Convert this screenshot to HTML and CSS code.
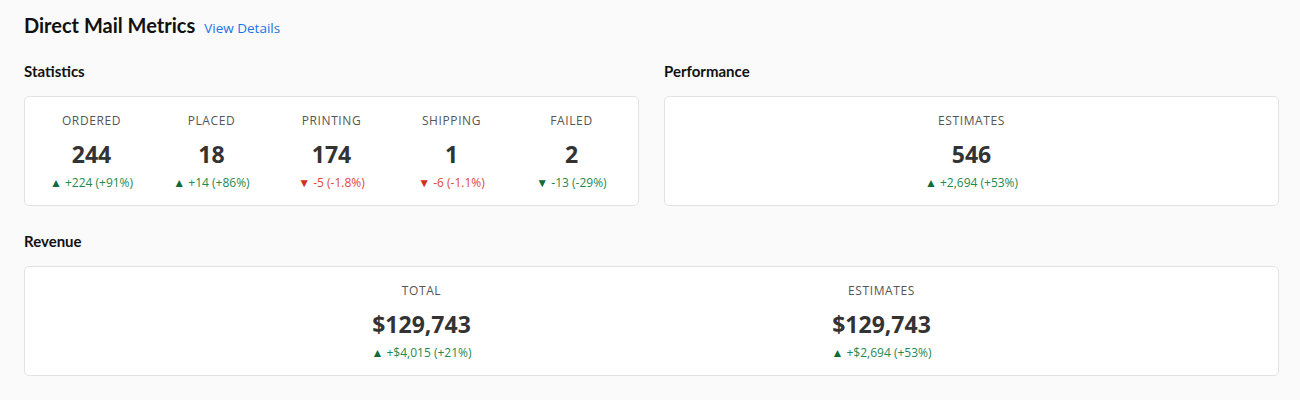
FILE: index.html
```html
<!DOCTYPE html>
<html lang="en">
<head>
    <meta charset="UTF-8">
    <meta name="viewport" content="width=device-width, initial-scale=1.0">
    <title>Direct Mail Metrics</title>
    <link rel="stylesheet" href="styles.css">
</head>
<body>

<div class="page-header">
    <h1>Direct Mail Metrics</h1>
    <a href="#" class="details-link">View Details</a>
</div>

<div class="top-row">
    <section class="panel">
        <h2>Statistics</h2>
        <div class="card">
            <div class="metric">
                <div class="metric-label">Ordered</div>
                <div class="metric-value">244</div>
                <div class="metric-change up">&#9650; +224 (+91%)</div>
            </div>
            <div class="metric">
                <div class="metric-label">Placed</div>
                <div class="metric-value">18</div>
                <div class="metric-change up">&#9650; +14 (+86%)</div>
            </div>
            <div class="metric">
                <div class="metric-label">Printing</div>
                <div class="metric-value">174</div>
                <div class="metric-change down">&#9660; -5 (-1.8%)</div>
            </div>
            <div class="metric">
                <div class="metric-label">Shipping</div>
                <div class="metric-value">1</div>
                <div class="metric-change down">&#9660; -6 (-1.1%)</div>
            </div>
            <div class="metric">
                <div class="metric-label">Failed</div>
                <div class="metric-value">2</div>
                <div class="metric-change good-down">&#9660; -13 (-29%)</div>
            </div>
        </div>
    </section>

    <section class="panel">
        <h2>Performance</h2>
        <div class="card">
            <div class="metric">
                <div class="metric-label">Estimates</div>
                <div class="metric-value">546</div>
                <div class="metric-change up">&#9650; +2,694 (+53%)</div>
            </div>
        </div>
    </section>
</div>

<section class="panel">
    <h2>Revenue</h2>
    <div class="card">
        <div class="metric wide">
            <div class="metric-label">Total</div>
            <div class="metric-value">$129,743</div>
            <div class="metric-change up">&#9650; +$4,015 (+21%)</div>
        </div>
        <div class="metric wide">
            <div class="metric-label">Estimates</div>
            <div class="metric-value">$129,743</div>
            <div class="metric-change up">&#9650; +$2,694 (+53%)</div>
        </div>
    </div>
</section>

</body>
</html>
```

FILE: styles.css
```css
body {
    font-family: "Open Sans", Arial, sans-serif;
    margin: 0;
    padding: 13px 21px 20px 24px;
    background-color: #fafafa;
    color: #222;
}
.page-header {
    display: flex;
    align-items: baseline;
    gap: 9px;
    margin-bottom: 25px;
}
h1 {
    font-family: Lato, sans-serif;
    font-size: 20px;
    font-weight: 700;
    margin: 0;
    color: #111;
}
.details-link {
    font-size: 13.5px;
    color: #1a73e8;
    text-decoration: none;
}
h2 {
    font-family: Lato, sans-serif;
    font-size: 15px;
    font-weight: 700;
    margin: 0 0 16px 0;
    color: #111;
}
.top-row {
    display: grid;
    grid-template-columns: 1fr 1fr;
    gap: 25px;
    margin-bottom: 26px;
}
.card {
    display: flex;
    justify-content: center;
    background: #fff;
    border: 1px solid #e2e2e2;
    border-radius: 5px;
    height: 110px;
    box-sizing: border-box;
    padding-top: 15px;
}
.metric {
    width: 120px;
    text-align: center;
}
.metric.wide {
    width: 460px;
}
.metric-label {
    font-size: 12px;
    text-transform: uppercase;
    letter-spacing: 0.6px;
    color: #555;
    line-height: 18px;
}
.metric-value {
    font-size: 23px;
    font-weight: 700;
    color: #333;
    line-height: 32px;
    margin-top: 8px;
}
.metric-change {
    font-size: 12px;
    line-height: 18px;
    margin-top: 4px;
}
.up, .good-down {
    color: #1e8a52;
}
.down {
    color: #e04a35;
}
.metric-change::first-letter {
    font-size: 12px;
}
.up::first-letter, .good-down::first-letter {
    color: #0f6b3a;
}
.down::first-letter {
    color: #d32f1a;
}
```
